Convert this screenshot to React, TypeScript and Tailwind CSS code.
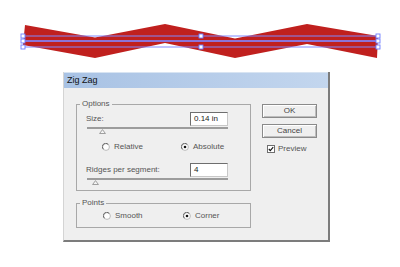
import React from "react";

function Radio({ checked }: { checked?: boolean }) {
    return (
        <svg width="8" height="8" viewBox="0 0 8 8" className="shrink-0">
            <circle cx="4" cy="4" r="3.4" fill="#fff" stroke="#b4b4b4" strokeWidth="0.9" />
            <path d="M1.3 6.2 A3.4 3.4 0 0 1 6.2 1.3" fill="none" stroke="#5a5a5a" strokeWidth="0.9" />
            {checked && <circle cx="4" cy="4" r="1.3" fill="#111" />}
        </svg>
    );
}

function Thumb() {
    return (
        <svg width="7" height="5" viewBox="0 0 7 5">
            <path d="M3.5 0.6 L6.4 4.5 L0.6 4.5 Z" fill="#f4f4f4" stroke="#8a8a8a" strokeWidth="0.8" />
        </svg>
    );
}

function Slider({ thumb }: { thumb: string }) {
    return (
        <div className="mt-[1px]">
            <div className="ml-[10px] w-[141px] h-[2px] bg-[#9c9c9c]" />
            <div className={thumb}>
                <Thumb />
            </div>
        </div>
    );
}

function Field({ value }: { value: string }) {
    return (
        <div className="w-[38px] h-[14px] mr-[22px] bg-white border border-t-[#6e6e6e] border-l-[#6e6e6e] border-r-[#c8c8c8] border-b-[#c8c8c8] pl-[3px] flex items-center text-[8px] text-[#222]">
            {value}
        </div>
    );
}

function Group({ label, h, children }: { label: string; h: string; children: React.ReactNode }) {
    return (
        <div className={`relative w-[175px] ${h} border border-[#a8a8a8]`}>
            <span className="absolute -top-[6px] left-[3px] px-[2px] bg-[#efefef] text-[8px] leading-[10px] text-[#555]">
                {label}
            </span>
            {children}
        </div>
    );
}

function Button({ label }: { label: string }) {
    return (
        <div className="w-[55px] h-[14px] flex items-center justify-center bg-[#efefef] border border-[#8a8a8a] shadow-[inset_1px_1px_0_#ffffff,inset_-1px_-1px_0_#bdbdbd] text-[8px] text-[#444]">
            {label}
        </div>
    );
}

function ZigZag() {
    const lines = [36, 41, 47];
    const handles = [
        [23, 36], [23, 41], [23, 47],
        [201, 36], [201, 47],
        [378, 36], [378, 41], [378, 47],
    ];
    return (
        <svg width="400" height="66" viewBox="0 0 400 66" className="block">
            <polygon
                points="25,25 95,37.5 165,24 235,38.5 307,24 378,36 377,58 307,44 235,58 165,43 95,58 23,45"
                fill="#c0201e"
            />
            {lines.map((y, i) => (
                <line
                    key={y}
                    x1="23"
                    x2="378"
                    y1={y}
                    y2={y}
                    stroke={i === 1 ? "#8c74d8" : "#8088ff"}
                    strokeWidth={i === 1 ? 1.8 : 1}
                />
            ))}
            {handles.map(([x, y]) => (
                <rect key={`${x}-${y}`} x={x - 2} y={y - 2} width="4" height="4" fill="#fff" stroke="#6d7cff" strokeWidth="0.9" />
            ))}
        </svg>
    );
}

export default function App() {
    return (
        <div className="w-[400px] h-[267px] bg-white overflow-hidden font-['Liberation_Sans',Arial,sans-serif]">
            <ZigZag />

            <div className="ml-[63px] mt-[6px] w-[267px] h-[170px] bg-[#efefef] border-l border-l-[#d4d4d4] border-r-2 border-r-[#7c7c7c] border-b-2 border-b-[#7c7c7c]">
                <div className="h-[16px] pl-[3px] flex items-center bg-gradient-to-r from-[#a8c2e4] to-[#c3d6ee] border-t border-t-[#d8e4f2] text-[9px] text-[#111]">
                    Zig Zag
                </div>

                <div className="flex pt-[16px]">
                    <div className="ml-[12px]">
                        <Group label="Options" h="h-[87px]">
                            <div className="mt-[7px] flex items-center text-[8px] text-[#555]">
                                <span className="flex-1 pl-[9px]">Size:</span>
                                <Field value="0.14 in" />
                            </div>
                            <Slider thumb="ml-[22px] h-[5px] leading-none" />

                            <div className="mt-[7px] h-[12px] pl-[25px] flex items-center text-[8px] text-[#555]">
                                <div className="w-[79px] flex items-center gap-[4px]">
                                    <Radio />
                                    <span>Relative</span>
                                </div>
                                <div className="flex items-center gap-[4px]">
                                    <Radio checked />
                                    <span>Absolute</span>
                                </div>
                            </div>

                            <div className="mt-[10px] flex items-center text-[8px] text-[#555]">
                                <span className="flex-1 pl-[9px]">Ridges per segment:</span>
                                <Field value="4" />
                            </div>
                            <Slider thumb="ml-[15px] h-[5px] leading-none" />
                        </Group>

                        <div className="mt-[12px]">
                            <Group label="Points" h="h-[25px]">
                                <div className="mt-[6px] h-[12px] pl-[26px] flex items-center text-[8px] text-[#555]">
                                    <div className="w-[80px] flex items-center gap-[4px]">
                                        <Radio />
                                        <span>Smooth</span>
                                    </div>
                                    <div className="flex items-center gap-[4px]">
                                        <Radio checked />
                                        <span>Corner</span>
                                    </div>
                                </div>
                            </Group>
                        </div>
                    </div>

                    <div className="ml-[11px] flex flex-col">
                        <Button label="OK" />
                        <div className="mt-[6px]">
                            <Button label="Cancel" />
                        </div>
                        <div className="mt-[5px] ml-[5px] flex items-center gap-[3px] text-[8px] text-[#555]">
                            <svg width="8" height="8" viewBox="0 0 8 8">
                                <rect x="0.5" y="0.5" width="7" height="7" fill="#fff" stroke="#6e6e6e" />
                                <path d="M1.8 4 L3.3 5.6 L6.2 2.2" fill="none" stroke="#111" strokeWidth="1.1" />
                            </svg>
                            <span>Preview</span>
                        </div>
                    </div>
                </div>
            </div>
        </div>
    );
}
